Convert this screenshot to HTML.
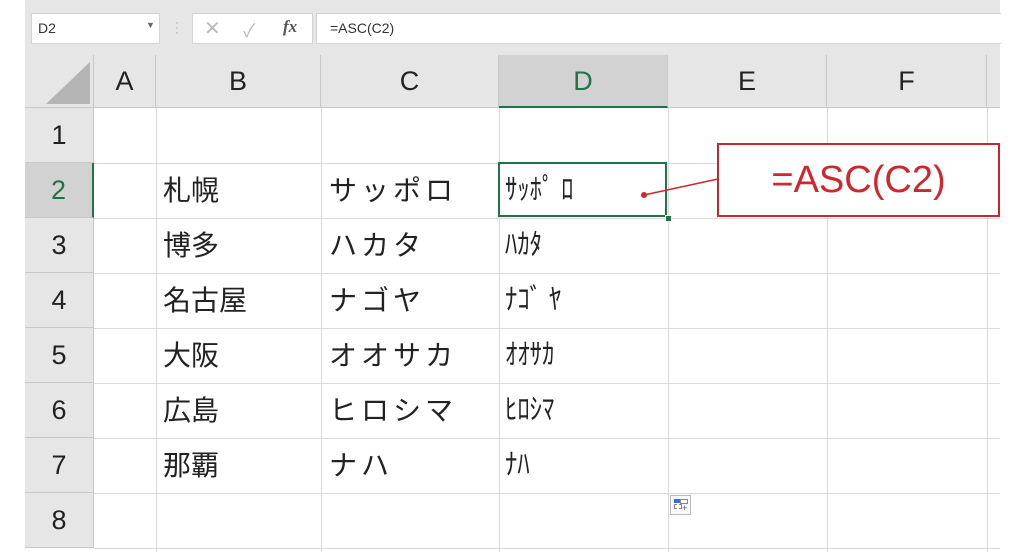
<!DOCTYPE html>
<html><head><meta charset="utf-8"><style>
body{margin:0;width:1024px;height:552px;background:#fff;position:relative;overflow:hidden;font-family:"Liberation Sans","Noto Sans CJK JP",sans-serif;}
.a{position:absolute;}
.top{left:25px;top:0;width:975px;height:55px;background:#e6e6e6;}
.box{background:#fff;border:1px solid #d4d4d4;height:29px;top:13px;}
.hdr{background:#e6e6e6;}
.ch{top:55px;height:53px;font-size:27px;color:#222;text-align:center;line-height:53px;border-right:1px solid #c8c8c8;border-bottom:1px solid #c8c8c8;box-sizing:border-box;}
.rh{left:25px;width:69px;height:55px;font-size:27px;color:#222;text-align:center;line-height:55px;border-bottom:1px solid #c8c8c8;border-right:1px solid #c8c8c8;box-sizing:border-box;background:#e6e6e6;}
.vl{width:1px;background:#dadada;top:108px;height:444px;}
.hl{height:1px;background:#dadada;left:94px;width:906px;}
.t{font-size:28px;color:#222;line-height:55px;}
.h{font-size:29px;color:#222;line-height:55px;transform:scaleX(0.85);transform-origin:left;}
</style></head><body>
<div class="a top"></div>
<div class="a box" style="left:31px;width:127px;"><span class="a" style="left:6px;top:6px;font-size:14px;color:#333">D2</span><span class="a" style="left:114px;top:6px;font-size:9px;color:#666">▼</span></div>
<div class="a" style="left:175px;top:20px;font-size:12px;color:#aaa;line-height:5px">·<br>·<br>·</div>
<div class="a box" style="left:192px;width:119px;"><span class="a" style="left:11px;top:2px;font-size:20px;color:#bbb">✕</span><span class="a" style="left:50px;top:3px;font-size:18px;color:#bbb">✓</span><span class="a" style="left:90px;top:3px;font-size:17px;color:#555;font-family:'Liberation Serif',serif;font-style:italic;font-weight:bold">fx</span></div>
<div class="a box" style="left:316px;width:684px;border-right:none"><span class="a" style="left:13px;top:6px;font-size:14px;color:#333">=ASC(C2)</span></div>

<div class="a hdr" style="left:25px;top:55px;width:69px;height:53px;border-right:1px solid #c8c8c8;border-bottom:1px solid #c8c8c8;box-sizing:border-box"></div>
<svg class="a" style="left:44px;top:60px" width="48" height="46"><polygon points="46,2 46,44 2,44" fill="#b4b4b4"/></svg>
<div class="a ch hdr" style="left:94px;width:62px">A</div>
<div class="a ch hdr" style="left:156px;width:165px">B</div>
<div class="a ch hdr" style="left:321px;width:178px">C</div>
<div class="a ch" style="left:499px;width:169px;background:#d2d2d2;color:#217346;border-bottom:2px solid #217346">D</div>
<div class="a ch hdr" style="left:668px;width:159px">E</div>
<div class="a ch hdr" style="left:827px;width:160px">F</div>
<div class="a hdr" style="left:987px;top:55px;width:13px;height:53px;border-bottom:1px solid #c8c8c8;box-sizing:border-box"></div>

<div class="a rh" style="top:108px">1</div>
<div class="a rh" style="top:163px;background:#d2d2d2;color:#217346;border-right:2px solid #217346">2</div>
<div class="a rh" style="top:218px">3</div>
<div class="a rh" style="top:273px">4</div>
<div class="a rh" style="top:328px">5</div>
<div class="a rh" style="top:383px">6</div>
<div class="a rh" style="top:438px">7</div>
<div class="a rh" style="top:493px">8</div>

<div class="a vl" style="left:156px"></div><div class="a vl" style="left:321px"></div><div class="a vl" style="left:499px"></div><div class="a vl" style="left:668px"></div><div class="a vl" style="left:827px"></div><div class="a vl" style="left:987px"></div>
<div class="a hl" style="top:163px"></div><div class="a hl" style="top:218px"></div><div class="a hl" style="top:273px"></div><div class="a hl" style="top:328px"></div><div class="a hl" style="top:383px"></div><div class="a hl" style="top:438px"></div><div class="a hl" style="top:493px"></div><div class="a hl" style="top:548px"></div>

<div class="a t" style="left:163px;top:163px">札幌</div>
<div class="a t" style="left:163px;top:218px">博多</div>
<div class="a t" style="left:163px;top:273px">名古屋</div>
<div class="a t" style="left:163px;top:328px">大阪</div>
<div class="a t" style="left:163px;top:383px">広島</div>
<div class="a t" style="left:163px;top:438px">那覇</div>
<div class="a t" style="left:329px;top:163px;letter-spacing:4px">サッポロ</div>
<div class="a t" style="left:329px;top:218px;letter-spacing:4px">ハカタ</div>
<div class="a t" style="left:329px;top:273px;letter-spacing:4px">ナゴヤ</div>
<div class="a t" style="left:329px;top:328px;letter-spacing:4px">オオサカ</div>
<div class="a t" style="left:329px;top:383px;letter-spacing:4px">ヒロシマ</div>
<div class="a t" style="left:329px;top:438px;letter-spacing:4px">ナハ</div>
<div class="a h" style="left:505px;top:163px">ｻｯﾎﾟ ﾛ</div>
<div class="a h" style="left:505px;top:218px">ﾊｶﾀ</div>
<div class="a h" style="left:505px;top:273px">ﾅｺﾞ ﾔ</div>
<div class="a h" style="left:505px;top:328px">ｵｵｻｶ</div>
<div class="a h" style="left:505px;top:383px">ﾋﾛｼﾏ</div>
<div class="a h" style="left:505px;top:438px">ﾅﾊ</div>

<div class="a" style="left:498px;top:162px;width:169px;height:55px;border:2px solid #217346;box-sizing:border-box"></div>
<div class="a" style="left:665px;top:215px;width:5px;height:5px;background:#217346;border:1px solid #fff"></div>

<svg class="a" style="left:0;top:0" width="1024" height="552"><line x1="644" y1="195" x2="718" y2="179" stroke="#d0262c" stroke-width="1.5"/><circle cx="644" cy="195" r="3" fill="#d0262c"/></svg>
<div class="a" style="left:717px;top:143px;width:283px;height:74px;border:2px solid #c8262c;box-sizing:border-box;background:#fff;color:#d0262c;font-size:38px;text-align:center;line-height:70px">=ASC(C2)</div>

<div class="a" style="left:670px;top:495px;width:21px;height:20px;border:1px solid #bbb;background:#fafafa;box-sizing:border-box">
<div class="a" style="left:3px;top:3px;width:6px;height:4px;background:#3a6fd8"></div><div class="a" style="left:9px;top:3px;width:6px;height:3px;border:1px solid #888"></div><div class="a" style="left:3px;top:8px;width:6px;height:3px;border:1px dashed #888"></div><div class="a" style="left:11px;top:7px;font-size:9px;color:#555">+</div></div>
</body></html>
